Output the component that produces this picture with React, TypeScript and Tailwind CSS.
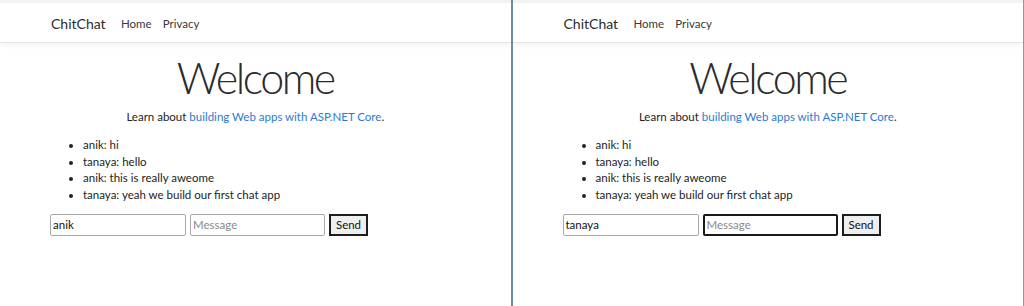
import React from 'react';

type PaneProps = {
  user: string;
  focused?: boolean;
};

const messages = [
  'anik: hi',
  'tanaya: hello',
  'anik: this is really aweome',
  'tanaya: yeah we build our first chat app',
];

function ChatPane({ user, focused }: PaneProps) {
  return (
    <div className="flex-1 h-full flex flex-col bg-white overflow-hidden">
      {/* top strip of the browser viewport */}
      <div className="h-[3px] bg-[#f3f3f3]" />

      {/* Navbar */}
      <header className="h-[40px] bg-white border-b border-[#e5e5e5] shadow-[0_2px_6px_rgba(0,0,0,0.06)] flex items-center pl-[51px] pt-[2px]">
        <span className="w-[70px] text-[14px] text-[#2b2b2b]">ChitChat</span>
        <nav className="flex gap-[11px] text-[11.5px] text-[#3a3a3a]">
          <span>Home</span>
          <span>Privacy</span>
        </nav>
      </header>

      <main className="flex-1 px-[50px] pt-[10px]">
        <div className="text-center">
          <h1 className="text-[43px] leading-[50px] font-light tracking-[-2.5px] text-[#2b2b2b]">Welcome</h1>
          <p className="mt-[5px] text-[11.5px] leading-[17px] text-[#232323]">
            Learn about <span className="text-[#2a7ad5]">building Web apps with ASP.NET Core</span>.
          </p>
        </div>

        <ul className="list-disc pl-[33px] mt-[12px] text-[11.5px] leading-[16.7px] text-[#232323]">
          {messages.map((m) => (
            <li key={m}>{m}</li>
          ))}
        </ul>

        <div className="flex items-center gap-[4px] mt-[10px]">
          <input
            readOnly
            value={user}
            className="w-[136px] h-[22px] border border-[#a9a9a9] rounded-[2px] px-[2px] text-[11.5px] text-[#111] outline-none"
          />
          <input
            readOnly
            placeholder="Message"
            className={`w-[135px] h-[22px] rounded-[2px] px-[2px] text-[11.5px] outline-none placeholder:text-[#8a8a8a] ${
              focused ? 'border-2 border-[#1a1a1a]' : 'border border-[#a9a9a9]'
            }`}
          />
          <button className="w-[39px] h-[22px] bg-[#efefef] border-2 border-[#1e1e1e] text-[11.5px] text-[#111]">
            Send
          </button>
        </div>
      </main>
    </div>
  );
}

export default function App() {
  return (
    <div
      className="w-[1024px] h-[306px] flex bg-white overflow-hidden"
      style={{ fontFamily: 'Lato, "Open Sans", sans-serif' }}
    >
      <ChatPane user="anik" />
      <div className="w-[2px] h-full bg-[#6f8aa8]" />
      <ChatPane user="tanaya" focused />
      <div className="w-[1px] h-full bg-[#6aa0d8]" />
    </div>
  );
}
